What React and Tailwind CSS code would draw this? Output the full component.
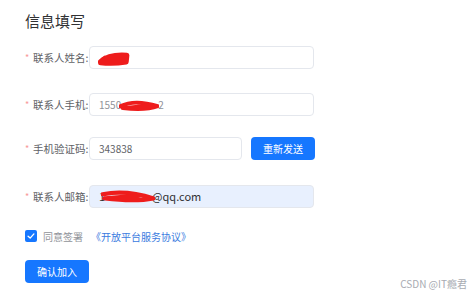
import React from 'react'

const font = { fontFamily: '"Noto Sans CJK SC", "Noto Sans", sans-serif' }

function Label({ children }) {
  return (
    <div className="w-[64px] flex items-center text-[10.5px] text-[#606266] whitespace-nowrap">
      <span className="text-[#f89898] mr-[3px] text-[9px] w-[5px]">*</span>
      {children}
    </div>
  )
}

function Scribble({ className, d, w = 10 }) {
  return (
    <svg className={`absolute pointer-events-none ${className}`} viewBox="0 0 100 40" preserveAspectRatio="none">
      <path d={d} fill="none" stroke="#ee1c1c" strokeWidth={w} strokeLinecap="round" strokeLinejoin="round" />
    </svg>
  )
}

export default function App() {
  return (
    <div className="w-[474px] h-[299px] bg-white relative overflow-hidden" style={font}>
      <div className="pl-[25px] pt-[11px]">
        <h1 className="text-[15px] leading-[20px] text-[#303133]">信息填写</h1>

        <div className="mt-[15px] flex items-center h-[23px]">
          <Label>联系人姓名:</Label>
          <div className="w-[225px] h-[23px] border border-[#e4e7ed] rounded-[4px] relative">
            <Scribble
              className="left-[8px] top-[5px] w-[32px] h-[14px]"
              w={16}
              d="M8 28 C 30 10, 60 8, 90 10 L 88 28 C 60 32, 30 32, 8 30 L 22 18 L 82 18"
            />
          </div>
        </div>

        <div className="mt-[24px] flex items-center h-[23px]">
          <Label>联系人手机:</Label>
          <div className="w-[225px] h-[23px] border border-[#e4e7ed] rounded-[4px] relative flex items-center pl-[9px] text-[10px] text-[#909399]">
            <span>1550</span>
            <span className="ml-[37px]">2</span>
            <Scribble
              className="left-[29px] top-[5px] w-[40px] h-[13px]"
              w={12}
              d="M4 22 C 30 6, 60 8, 96 22 C 70 34, 40 32, 10 28 L 80 20"
            />
          </div>
        </div>

        <div className="mt-[21px] flex items-center h-[23px]">
          <Label>手机验证码:</Label>
          <div className="w-[153px] h-[23px] border border-[#e4e7ed] rounded-[4px] flex items-center pl-[9px] text-[10px] text-[#606266]">
            343838
          </div>
          <button className="ml-[9px] w-[64px] h-[23px] rounded-[4px] bg-[#1677ff] text-white text-[10px]">
            重新发送
          </button>
        </div>

        <div className="mt-[25px] flex items-center h-[23px]">
          <Label>联系人邮箱:</Label>
          <div className="w-[225px] h-[23px] border border-[#e4e7ed] bg-[#e8f0fe] rounded-[4px] relative flex items-center pl-[9px] text-[11px] text-[#303133]">
            <span>1</span>
            <span className="ml-[47px]">@qq.com</span>
            <Scribble
              className="left-[11px] top-[4px] w-[54px] h-[14px]"
              w={12}
              d="M4 12 C 30 4, 60 6, 96 24 C 70 32, 40 30, 8 24 L 70 16"
            />
          </div>
        </div>

        <div className="mt-[22px] flex items-center h-[12px] text-[10px]">
          <span className="w-[12px] h-[12px] rounded-[2px] bg-[#1677ff] flex items-center justify-center">
            <svg viewBox="0 0 12 12" className="w-[10px] h-[10px]">
              <path d="M2.5 6.2 L5 8.5 L9.5 3.5" fill="none" stroke="white" strokeWidth="1.6" strokeLinecap="round" strokeLinejoin="round" />
            </svg>
          </span>
          <span className="ml-[6px] text-[#909399]">同意签署</span>
          <span className="ml-[8px] text-[#3a7be0]">《开放平台服务协议》</span>
        </div>

        <button className="mt-[18px] w-[64px] h-[23px] rounded-[4px] bg-[#1677ff] text-white text-[10px]">
          确认加入
        </button>
      </div>

      <div className="absolute right-[7px] bottom-[9px] text-[10px] leading-[12px] text-[#a8abb2]">CSDN @IT瘾君</div>
    </div>
  )
}
